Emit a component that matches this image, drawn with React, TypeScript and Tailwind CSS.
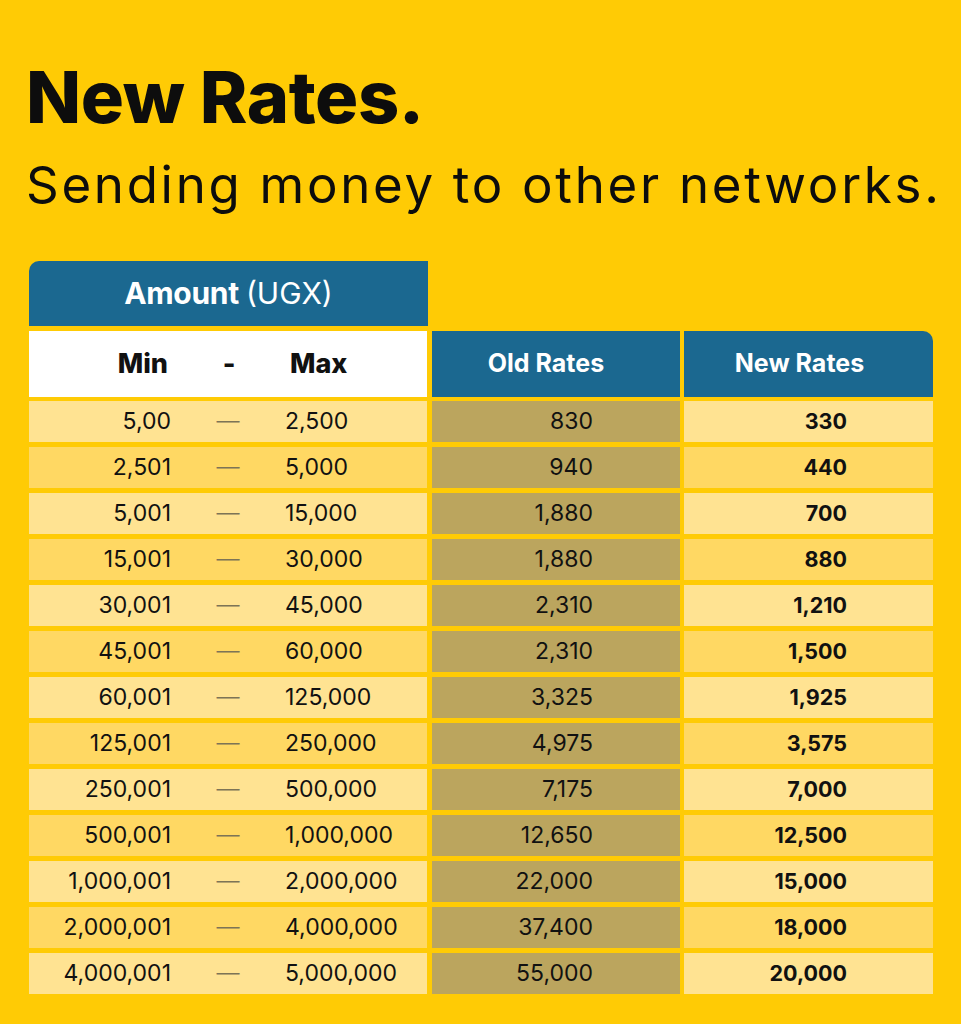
const rows: [string, string, string, string][] = [
  ["5,00", "2,500", "830", "330"],
  ["2,501", "5,000", "940", "440"],
  ["5,001", "15,000", "1,880", "700"],
  ["15,001", "30,000", "1,880", "880"],
  ["30,001", "45,000", "2,310", "1,210"],
  ["45,001", "60,000", "2,310", "1,500"],
  ["60,001", "125,000", "3,325", "1,925"],
  ["125,001", "250,000", "4,975", "3,575"],
  ["250,001", "500,000", "7,175", "7,000"],
  ["500,001", "1,000,000", "12,650", "12,500"],
  ["1,000,001", "2,000,000", "22,000", "15,000"],
  ["2,000,001", "4,000,000", "37,400", "18,000"],
  ["4,000,001", "5,000,000", "55,000", "20,000"],
];

export default function App() {
  return (
    <div className="h-[1024px] w-full overflow-hidden bg-[#FFCB05] font-['Inter',sans-serif] text-[#111]">
      <div className="pl-[26px] pt-[57px]">
        <h1 className="text-[72px] leading-[80px] font-extrabold tracking-[-0.4px] text-[#0d0d0d]">New Rates.</h1>
        <p className="mt-[18px] text-[51px] leading-[60px] tracking-[2.7px] text-[#0d0d0d]">
          Sending money to other networks.
        </p>
      </div>

      <div className="mt-[46px] ml-[29px] w-[904px]">
        <div className="flex h-[65px] w-[399px] items-center justify-center rounded-tl-[10px] bg-[#1B6890] text-[30px] text-white">
          <span className="font-bold tracking-[-0.3px]">Amount</span>
          <span className="ml-[7px] font-normal">(UGX)</span>
        </div>

        <div className="mt-[5px] flex h-[66px]">
          <div className="flex w-[398px] items-center bg-white text-[27px] font-extrabold">
            <span className="w-[139px] text-right">Min</span>
            <span className="w-[122px] text-center">-</span>
            <span>Max</span>
          </div>
          <div className="ml-[5px] flex w-[248px] items-center justify-center pr-[20px] bg-[#1B6890] text-[25px] font-bold text-white">
            Old Rates
          </div>
          <div className="ml-[4px] flex w-[249px] items-center justify-center pr-[18px] rounded-tr-[10px] bg-[#1B6890] text-[25px] font-bold text-white">
            New Rates
          </div>
        </div>

        <div className="mt-[4px] flex flex-col gap-[5px]">
          {rows.map(([min, max, oldRate, newRate], i) => {
            const tint = i % 2 === 0 ? "bg-[#FFE392]" : "bg-[#FFD863]";
            return (
              <div key={min} className="flex h-[41px] text-[23px]">
                <div className={`flex w-[398px] items-center ${tint}`}>
                  <span className="w-[142px] text-right">{min}</span>
                  <span className="w-[114px] text-center font-light text-[#7d7456]">—</span>
                  <span>{max}</span>
                </div>
                <div className="ml-[5px] flex w-[248px] items-center justify-end pr-[87px] bg-[#BBA55E]">
                  {oldRate}
                </div>
                <div className={`ml-[4px] flex w-[249px] items-center justify-end pr-[86px] text-[21.5px] font-bold ${tint}`}>
                  {newRate}
                </div>
              </div>
            );
          })}
        </div>
      </div>
    </div>
  );
}
